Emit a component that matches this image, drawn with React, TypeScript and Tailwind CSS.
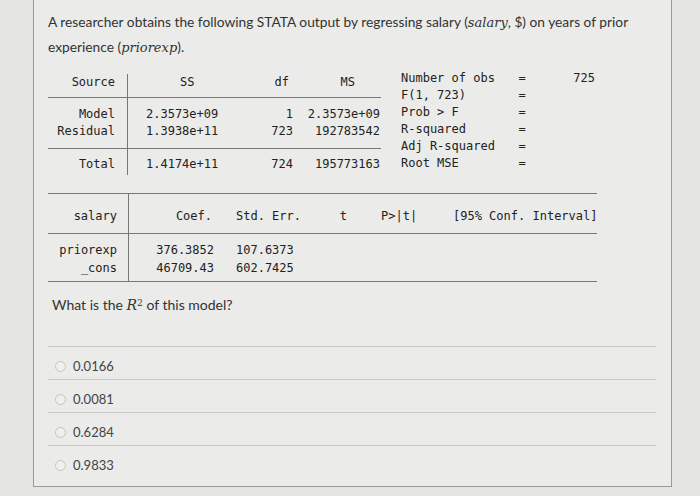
import React from "react";

const mono = { fontFamily: '"DejaVu Sans Mono", "Liberation Mono", monospace' };
const lato = { fontFamily: 'Lato, "Open Sans", sans-serif' };
const serifI = { fontFamily: '"DejaVu Serif", "Liberation Serif", serif', fontStyle: "italic" as const };

function Stat({ label, value }: { label: string; value?: string }) {
  return (
    <div className="flex h-[17px] items-center whitespace-nowrap leading-[17px]">
      <span className="w-[116px]">{label}</span>
      <span className="w-[10px] text-center">=</span>
      <span className="w-[68px] text-right">{value ?? ""}</span>
    </div>
  );
}

export default function App() {
  const options = ["0.0166", "0.0081", "0.6284", "0.9833"];
  return (
    <div className="h-[496px] w-[700px] overflow-hidden bg-[#e4e4e2]">
      <div className="ml-[33px] h-[487px] w-[639px] border-b border-l border-r border-[#9a9a98] bg-[#ebebe9] pl-[14px] pt-[10px] text-[#333]">
        <p className="whitespace-nowrap text-[13.75px] leading-[24px]" style={lato}>
          A researcher obtains the following STATA output by regressing salary (
          <span style={serifI} className="text-[13px]">salary</span>, $) on years of prior
          <br />
          experience (<span style={serifI} className="text-[13px]">priorexp</span>).
        </p>

        {/* Table 1 */}
        <div className="mt-[10px] flex items-start whitespace-nowrap text-[12px] text-[#222]" style={mono}>
          <div className="mt-[4px] w-[333px]">
            <div className="flex h-[24px] border-b border-[#777]">
              <div className="w-[80px] border-r border-[#777] pr-[12px] text-right leading-[17px]">Source</div>
              <div className="w-[104px] pl-[52px] leading-[17px]">SS</div>
              <div className="w-[61px] pr-[4px] text-right leading-[17px]">df</div>
              <div className="w-[87px] pr-[25px] text-right leading-[17px]">MS</div>
            </div>
            <div className="flex h-[51px] border-b border-[#777]">
              <div className="w-[80px] border-r border-[#777] pr-[12px] pt-[8px] text-right leading-[17px]">
                <div>Model</div>
                <div>Residual</div>
              </div>
              <div className="w-[104px] pl-[18px] pt-[8px] leading-[17px]">
                <div>2.3573e+09</div>
                <div>1.3938e+11</div>
              </div>
              <div className="w-[61px] pt-[8px] text-right leading-[17px]">
                <div>1</div>
                <div>723</div>
              </div>
              <div className="w-[87px] pt-[8px] text-right leading-[17px]">
                <div>2.3573e+09</div>
                <div>192783542</div>
              </div>
            </div>
            <div className="flex h-[26px]">
              <div className="w-[80px] border-r border-[#777] pr-[12px] pt-[7px] text-right leading-[17px]">Total</div>
              <div className="w-[104px] pl-[18px] pt-[7px] leading-[17px]">1.4174e+11</div>
              <div className="w-[61px] pt-[7px] text-right leading-[17px]">724</div>
              <div className="w-[87px] pt-[7px] text-right leading-[17px]">195773163</div>
            </div>
          </div>
          <div className="ml-[20px]">
            <Stat label="Number of obs" value="725" />
            <Stat label="F(1, 723)" />
            <Stat label="Prob > F" />
            <Stat label="R-squared" />
            <Stat label="Adj R-squared" />
            <Stat label="Root MSE" />
          </div>
        </div>

        {/* Table 2 */}
        <div className="mt-[18px] w-[549px] whitespace-nowrap border-b border-t border-[#777] text-[12px] text-[#222]" style={mono}>
          <div className="flex h-[40px] border-b border-[#777] leading-[17px]">
            <div className="w-[81px] shrink-0 border-r border-[#777] pr-[11px] pt-[14px] text-right">salary</div>
            <div className="w-[85px] shrink-0 pr-[2px] pt-[14px] text-right">Coef.</div>
            <div className="w-[87px] shrink-0 pl-[22px] pt-[14px]">Std. Err.</div>
            <div className="w-[48px] shrink-0 pr-[2px] pt-[14px] text-right">t</div>
            <div className="w-[68px] shrink-0 pl-[32px] pt-[14px]">P&gt;|t|</div>
            <div className="w-[179px] shrink-0 pl-[36px] pt-[14px]">[95% Conf. Interval]</div>
          </div>
          <div className="flex h-[47px] leading-[18px]">
            <div className="w-[81px] shrink-0 border-r border-[#777] pr-[11px] pt-[7px] text-right">
              <div>priorexp</div>
              <div>_cons</div>
            </div>
            <div className="w-[85px] shrink-0 pt-[7px] text-right">
              <div>376.3852</div>
              <div>46709.43</div>
            </div>
            <div className="w-[87px] shrink-0 pl-[22px] pt-[7px]">
              <div>107.6373</div>
              <div>602.7425</div>
            </div>
          </div>
        </div>

        <p className="mt-[13px] pl-[4px] text-[14px] leading-[20px]" style={lato}>
          What is the{" "}
          <span style={serifI} className="text-[14px]">
            R<sup className="text-[9px] not-italic">2</sup>
          </span>{" "}
          of this model?
        </p>

        <div className="mt-[31px] w-[608px]">
          {options.map((o) => (
            <div key={o} className="flex h-[33px] items-start border-t border-[#c9c9c6] pl-[7px] pt-[11px]">
              <span className="mt-[3px] h-[11px] w-[11px] rounded-full border border-[#c4c4c2] bg-[#efefed]" />
              <span className="ml-[7px] text-[13px] leading-[17px] text-[#444]" style={lato}>
                {o}
              </span>
            </div>
          ))}
        </div>
      </div>
    </div>
  );
}
